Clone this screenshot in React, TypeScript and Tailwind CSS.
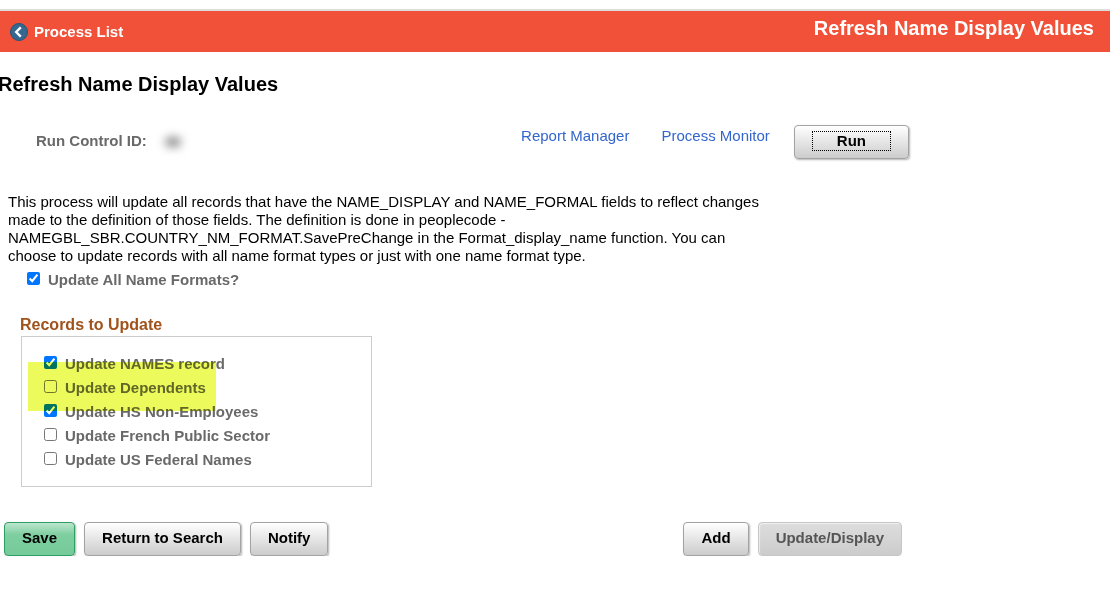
import React, { useState } from "react";
import clsx from "clsx";

const records = [
    { id: "names", label: "Update NAMES record", checked: true },
    { id: "dependents", label: "Update Dependents", checked: false, highlight: true },
    { id: "hs", label: "Update HS Non-Employees", checked: true },
    { id: "french", label: "Update French Public Sector", checked: false },
    { id: "federal", label: "Update US Federal Names", checked: false },
];

type ButtonProps = {
    children: React.ReactNode;
    variant?: "default" | "save" | "disabled";
    focused?: boolean;
};

function Button({ children, variant = "default", focused }: ButtonProps) {
    return (
        <button
            type="button"
            disabled={variant === "disabled"}
            className={clsx(
                "rounded border text-[15px] leading-[18px] font-bold",
                focused ? "px-[17px] pt-[5px] pb-[7px]" : "px-[17px] pt-1.5 pb-2",
                variant === "default" &&
                    "border-[#a3a3a3] bg-linear-to-b from-white to-[#cccccc] text-black shadow-[1px_1px_2px_rgba(0,0,0,0.3)]",
                variant === "save" &&
                    "border-[#2f9e62] bg-linear-to-b from-[#bce6cf] via-[#7fcfa1] via-35% to-[#75ca99] text-black shadow-[1px_1px_2px_rgba(0,0,0,0.3)]",
                variant === "disabled" &&
                    "border-[#c6c6c6] bg-linear-to-b from-[#dddddd] to-[#cccccc] text-[#555555] shadow-[inset_1px_1px_1px_rgba(255,255,255,0.6)]"
            )}
        >
            {focused ? <span className="block border border-dotted border-black px-6">{children}</span> : children}
        </button>
    );
}

type CheckProps = {
    id: string;
    label: string;
    defaultChecked: boolean;
};

function Check({ id, label, defaultChecked }: CheckProps) {
    const [checked, setChecked] = useState(defaultChecked);

    return (
        <div className="flex items-center gap-2 h-6">
            <input
                id={id}
                type="checkbox"
                checked={checked}
                onChange={(e) => setChecked(e.target.checked)}
                className="size-[13px] mb-1"
            />
            <label htmlFor={id} className="font-bold text-[#696969]">
                {label}
            </label>
        </div>
    );
}

export default function App() {
    return (
        <div className="bg-white pt-[9px] font-['Liberation_Sans',Arial,sans-serif] text-[15px] leading-[18px] text-black">
            {/* Banner */}
            <header className="flex items-start justify-between border-t-2 border-[#dddddd] bg-[#f05138] pl-2.5 pr-4 pb-[11px] text-white">
                <a href="#process-list" className="flex items-center gap-1.5 pt-3 font-bold">
                    <svg viewBox="0 0 18 18" className="size-[18px]" aria-hidden="true">
                        <circle cx="9" cy="9" r="8.5" fill="#35678f" stroke="#24557c" />
                        <path d="M10.8 4.4 6.2 9l4.6 4.6" fill="none" stroke="#fff" strokeWidth="2.4" />
                    </svg>
                    Process List
                </a>
                <span className="pt-[5px] text-xl leading-6 font-bold">Refresh Name Display Values</span>
            </header>

            <main className="max-w-[909px]">
                <h1 className="-ml-0.5 pt-5 text-xl leading-6 font-bold">Refresh Name Display Values</h1>

                {/* Run control */}
                <div className="flex items-center pt-[29px] pl-9">
                    <span className="pb-0.5 font-bold text-[#696969]">Run Control ID:</span>
                    <span className="ml-[18px] h-2.5 w-4 rounded-full bg-[#8c8c8c] blur-[5px]" />
                    <nav className="ml-auto mr-6 flex gap-8 pb-3 text-[#3366cc]">
                        <a href="#report-manager">Report Manager</a>
                        <a href="#process-monitor">Process Monitor</a>
                    </nav>
                    <Button focused>Run</Button>
                </div>

                <p className="max-w-3xl pt-[34px] pl-2">
                    This process will update all records that have the NAME_DISPLAY and NAME_FORMAL fields to reflect
                    changes made to the definition of those fields. The definition is done in peoplecode -
                    NAMEGBL_SBR.COUNTRY_NM_FORMAT.SavePreChange in the Format_display_name function. You can choose to
                    update records with all name format types or just with one name format type.
                </p>
                <div className="pt-[3px] pl-[27px]">
                    <Check id="all-formats" label="Update All Name Formats?" defaultChecked />
                </div>

                {/* Record choices */}
                <section className="pt-[23px]">
                    <h2 className="pl-5 text-base leading-5 font-bold text-[#a0521a]">Records to Update</h2>
                    <div className="mt-px ml-[21px] max-w-[351px] border border-[#cccccc] pt-[15px] pb-3.5 pl-[22px]">
                        {records.map((r) => (
                            <div key={r.id} className="relative">
                                <Check id={r.id} label={r.label} defaultChecked={r.checked} />
                                {r.highlight && (
                                    <span className="pointer-events-none absolute z-10 -top-3.5 -left-4 h-[49px] w-[188px] bg-[#ecfa5c] mix-blend-multiply" />
                                )}
                            </div>
                        ))}
                    </div>
                </section>

                {/* Toolbar */}
                <div className="flex justify-between pt-[35px] pl-1 pr-[7px]">
                    <div className="flex gap-[9px]">
                        <Button variant="save">Save</Button>
                        <Button>Return to Search</Button>
                        <Button>Notify</Button>
                    </div>
                    <div className="flex gap-[9px]">
                        <Button>Add</Button>
                        <Button variant="disabled">Update/Display</Button>
                    </div>
                </div>
            </main>
        </div>
    );
}
